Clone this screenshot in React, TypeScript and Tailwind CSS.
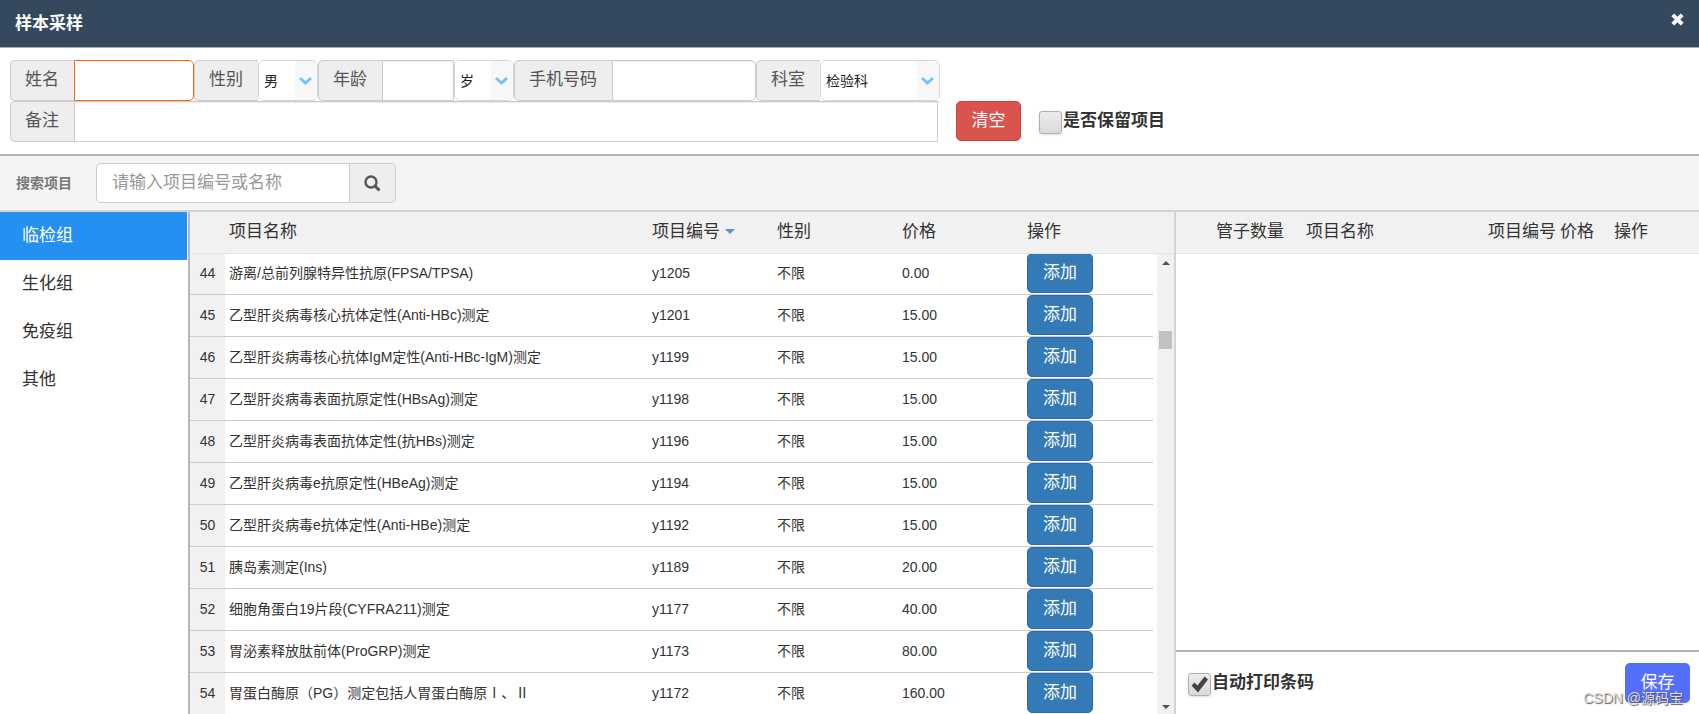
import { useState, type ReactNode } from "react";

const GROUPS = ["临检组", "生化组", "免疫组", "其他"];

const ITEMS = [
  { no: 44, name: "游离/总前列腺特异性抗原(FPSA/TPSA)", code: "y1205", price: "0.00" },
  { no: 45, name: "乙型肝炎病毒核心抗体定性(Anti-HBc)测定", code: "y1201", price: "15.00" },
  { no: 46, name: "乙型肝炎病毒核心抗体IgM定性(Anti-HBc-IgM)测定", code: "y1199", price: "15.00" },
  { no: 47, name: "乙型肝炎病毒表面抗原定性(HBsAg)测定", code: "y1198", price: "15.00" },
  { no: 48, name: "乙型肝炎病毒表面抗体定性(抗HBs)测定", code: "y1196", price: "15.00" },
  { no: 49, name: "乙型肝炎病毒e抗原定性(HBeAg)测定", code: "y1194", price: "15.00" },
  { no: 50, name: "乙型肝炎病毒e抗体定性(Anti-HBe)测定", code: "y1192", price: "15.00" },
  { no: 51, name: "胰岛素测定(Ins)", code: "y1189", price: "20.00" },
  { no: 52, name: "细胞角蛋白19片段(CYFRA211)测定", code: "y1177", price: "40.00" },
  { no: 53, name: "胃泌素释放肽前体(ProGRP)测定", code: "y1173", price: "80.00" },
  { no: 54, name: "胃蛋白酶原（PG）测定包括人胃蛋白酶原Ⅰ、Ⅱ", code: "y1172", price: "160.00" },
];

function Addon({ htmlFor, children }: { htmlFor: string; children: ReactNode }) {
  return (
    <label
      htmlFor={htmlFor}
      className="flex shrink-0 items-center rounded-l-[5px] border-y border-l border-[#ccc] bg-[#eee] px-[14px] pb-0.5 text-[17px] text-[#555]"
    >
      <span className="pr-px">{children}</span>
    </label>
  );
}

function Choice({ id, width, options }: { id: string; width: string; options: string[] }) {
  return (
    <div className={"relative flex shrink-0 overflow-hidden rounded-[6px] border border-[#d6d6d6] bg-white " + width}>
      <select id={id} className="w-full appearance-none bg-white pl-[5px] text-sm text-[#222] outline-none">
        {options.map((o) => (
          <option key={o}>{o}</option>
        ))}
      </select>
      <span className="pointer-events-none absolute inset-y-0 right-0 flex w-[22px] items-center justify-center bg-[#f7f7f7]">
        <svg width="14" height="10" viewBox="0 0 14 10" fill="none" stroke="#7cc1f4" strokeWidth="3">
          <path d="M1 2 L6.5 7 L12 2" />
        </svg>
      </span>
    </div>
  );
}

function TickBox({ id, label, initial }: { id: string; label: string; initial: boolean }) {
  const [on, setOn] = useState(initial);
  return (
    <div className="flex items-center gap-px">
      <span className="relative mt-1 flex size-[23px]">
        <input
          id={id}
          type="checkbox"
          checked={on}
          onChange={(e) => setOn(e.target.checked)}
          className="size-[23px] appearance-none rounded-[3px] border border-[#b0b0b0] bg-gradient-to-b from-[#ececec] to-[#dadada] shadow-sm"
        />
        {on && (
          <svg className="pointer-events-none absolute inset-0" width="23" height="23" viewBox="0 0 23 23">
            <path d="M3.5 12.5 L6.5 9.5 L9.5 12.5 L16.5 3.5 L20 6.5 L10 19.5 Z" fill="#444" />
          </svg>
        )}
      </span>
      <label htmlFor={id} className="text-[17px] leading-6 font-bold text-[#333]">
        {label}
      </label>
    </div>
  );
}

export default function App() {
  const [group, setGroup] = useState(GROUPS[0]);
  return (
    <div className="flex h-screen flex-col overflow-hidden bg-white font-['Liberation_Sans','Noto_Sans_CJK_SC',sans-serif] text-[#333]">
      <header className="flex h-12 shrink-0 items-center justify-between border-b border-[#aaa] bg-[#34495e] px-[15px] text-white">
        <h1 className="text-[17px] leading-6 font-bold">样本采样</h1>
        <button aria-label="关闭" className="mb-2">
          <svg width="13" height="13" viewBox="0 0 13 13" stroke="#fff" strokeWidth="4">
            <path d="M1.8 1.8 L11.2 11.2 M11.2 1.8 L1.8 11.2" />
          </svg>
        </button>
      </header>

      <form className="flex h-[108px] shrink-0 flex-col border-b-2 border-[#b4b4b4] pt-3 pl-[10px]">
        <div className="flex h-[41px]">
          <Addon htmlFor="name">姓名</Addon>
          <input id="name" className="w-[120px] rounded-r-[5px] border border-[#f60] px-3 text-[17px] outline-none" />
          <Addon htmlFor="sex">性别</Addon>
          <Choice id="sex" width="w-[60px]" options={["男", "女"]} />
          <Addon htmlFor="age">年龄</Addon>
          <input id="age" className="w-[72px] border border-[#ccc] px-3 text-[17px] shadow-[inset_0_1px_1px_rgba(0,0,0,0.08)] outline-none" />
          <Choice id="unit" width="w-[60px]" options={["岁", "月", "天"]} />
          <Addon htmlFor="phone">手机号码</Addon>
          <input id="phone" className="w-[144px] rounded-r-[5px] border border-[#ccc] px-3 text-[17px] shadow-[inset_0_1px_1px_rgba(0,0,0,0.08)] outline-none" />
          <Addon htmlFor="dept">科室</Addon>
          <Choice id="dept" width="w-[120px]" options={["检验科"]} />
        </div>
        <div className="flex h-[41px]">
          <Addon htmlFor="remark">备注</Addon>
          <input id="remark" className="w-[864px] border border-[#ccc] px-3 text-[17px] shadow-[inset_0_1px_1px_rgba(0,0,0,0.08)] outline-none" />
          <button type="button" className="ml-[18px] h-10 w-[65px] rounded-[5px] border border-[#d43f3a] bg-[#d9534f] text-[17px] text-white">
            清空
          </button>
          <div className="mb-0.5 ml-[18px] flex">
            <TickBox id="keep" label="是否保留项目" initial={false} />
          </div>
        </div>
      </form>

      <div className="flex h-14 shrink-0 items-center border-b-2 border-[#d4d4d4] bg-[#f4f4f4] pl-4">
        <label htmlFor="search" className="w-20 text-sm font-bold text-[#777]">
          搜索项目
        </label>
        <input
          id="search"
          placeholder="请输入项目编号或名称"
          className="h-10 w-[254px] rounded-l-[5px] border border-[#ccc] bg-white px-[15px] text-[17px] outline-none placeholder:text-[#999]"
        />
        <button aria-label="搜索" className="flex h-10 w-[46px] items-center justify-center rounded-r-[5px] border border-l-0 border-[#ccc] bg-[#eee]">
          <svg width="17" height="17" viewBox="0 0 17 17" fill="none" stroke="#555">
            <circle cx="7" cy="7" r="5.5" strokeWidth="2.4" />
            <path d="M11 11 L15.5 15.5" strokeWidth="3" />
          </svg>
        </button>
      </div>

      <main className="flex min-h-0 flex-1">
        <nav className="w-[190px] shrink-0 border-r-2 border-[#b8b8b8]">
          {GROUPS.map((g) => (
            <button
              key={g}
              onClick={() => setGroup(g)}
              className={
                "block h-12 w-[187px] pl-[22px] text-left text-[17px] " +
                (g === group ? "bg-[#2490f2] text-white" : "text-[#333]")
              }
            >
              {g}
            </button>
          ))}
        </nav>

        <section className="flex min-w-0 flex-1 flex-col border-r-2 border-[#d4d4d4]">
          <div className="flex h-[42px] shrink-0 items-center border-b border-[#e5e5e5] bg-[#f1f1f1] pr-[21px] pb-0.5 text-[17px]">
            <span className="w-[35px]" />
            <span className="flex-1 pl-1">项目名称</span>
            <span className="flex w-[125px] items-center gap-[5px] pl-1">
              项目编号
              <svg width="10" height="5" viewBox="0 0 10 5">
                <path d="M0 0 H10 L5 5 Z" fill="#5b8fd6" />
              </svg>
            </span>
            <span className="w-[125px] pl-1">性别</span>
            <span className="w-[125px] pl-1">价格</span>
            <span className="w-[130px] pl-1">操作</span>
          </div>
          <div className="flex min-h-0 flex-1">
            <div className="min-w-0 flex-1 overflow-hidden pr-1">
              <table className="-mt-px w-full table-fixed border-separate border-spacing-0 text-sm">
                <colgroup>
                  <col className="w-[35px]" />
                  <col />
                  <col className="w-[125px]" />
                  <col className="w-[125px]" />
                  <col className="w-[125px]" />
                  <col className="w-[130px]" />
                </colgroup>
                <tbody>
                  {ITEMS.map((it) => (
                    <tr key={it.no} className="h-[42px]">
                      <td className="border-b border-[#ccc] bg-[#f1f1f1] p-0 pb-0.5 text-center">{it.no}</td>
                      <td className="border-b border-[#ccc] p-0 pb-0.5 pl-1">{it.name}</td>
                      <td className="border-b border-[#ccc] p-0 pb-0.5 pl-1">{it.code}</td>
                      <td className="border-b border-[#ccc] p-0 pb-0.5 pl-1">不限</td>
                      <td className="border-b border-[#ccc] p-0 pb-0.5 pl-1">{it.price}</td>
                      <td className="border-b border-[#ccc] p-0 pl-1 align-top">
                        <button className="block h-10 w-[66px] rounded-[5px] border border-[#2e6da4] bg-[#337ab7] text-[17px] text-white">
                          添加
                        </button>
                      </td>
                    </tr>
                  ))}
                </tbody>
              </table>
            </div>
            <div className="flex w-[17px] shrink-0 flex-col items-center justify-between bg-[#f1f1f1] pt-[7px] pb-[5px]">
              <div className="flex flex-col items-center gap-[66px]">
                <svg width="8" height="4" viewBox="0 0 8 4">
                  <path d="M0 4 L4 0 L8 4 Z" fill="#505050" />
                </svg>
                <div className="h-[18px] w-[13px] bg-[#c1c1c1]" />
              </div>
              <svg width="8" height="4" viewBox="0 0 8 4">
                <path d="M0 0 L4 4 L8 0 Z" fill="#505050" />
              </svg>
            </div>
          </div>
        </section>

        <section className="flex w-[523px] shrink-0 flex-col">
          <div className="flex h-[42px] shrink-0 items-center border-b border-[#e5e5e5] bg-[#f1f1f1] pb-0.5 pl-9 text-[17px]">
            <span className="w-[90px] pl-1">管子数量</span>
            <span className="w-[182px] pl-1">项目名称</span>
            <span className="w-[72px] pl-1">项目编号</span>
            <span className="w-[54px] pl-1">价格</span>
            <span className="pl-1">操作</span>
          </div>
          <div className="flex-1" />
          <footer className="relative flex h-16 shrink-0 items-start justify-between border-t-2 border-[#b4b4b4] pt-[11px] pr-[9px] pl-3">
            <div className="pt-1.5">
              <TickBox id="print" label="自动打印条码" initial />
            </div>
            <button className="h-10 w-[65px] rounded-[5px] bg-[#546ffa] text-[17px] text-white">保存</button>
            <span className="pointer-events-none absolute right-4 bottom-1.5 text-sm leading-5 text-[#ddd] [text-shadow:1px_1px_1px_#555]">
              CSDN @源码宝
            </span>
          </footer>
        </section>
      </main>
    </div>
  );
}
